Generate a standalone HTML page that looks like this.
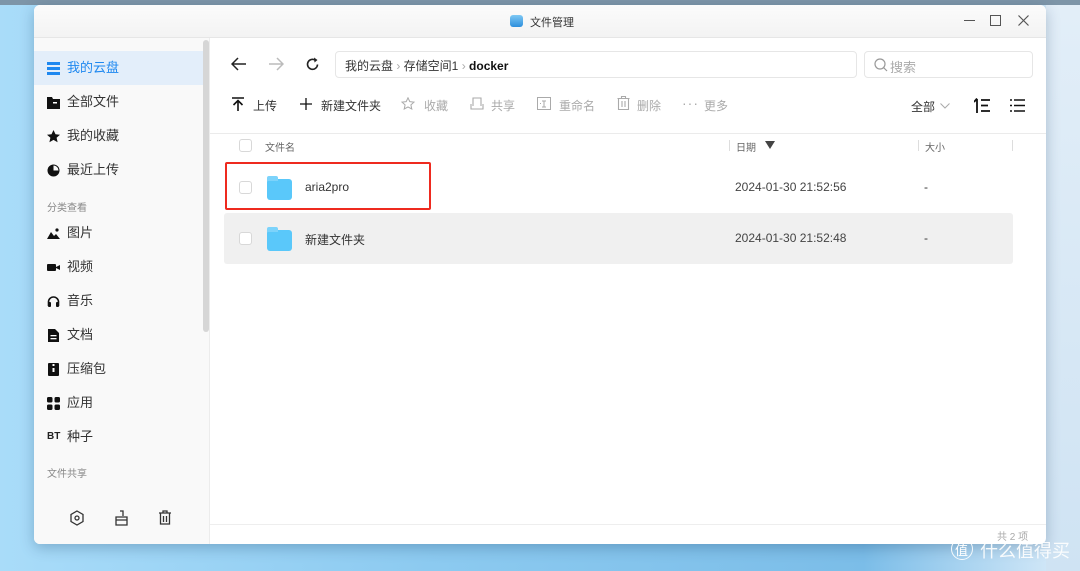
<!DOCTYPE html><html><head><meta charset="utf-8"><style>
*{margin:0;padding:0;box-sizing:border-box}
body{width:1080px;height:571px;overflow:hidden;position:relative;font-family:"Liberation Sans","Noto Sans CJK SC",sans-serif;background:linear-gradient(90deg,#a9dcf9 0%,#8ccaf0 40%,#7bbde8 80%,#cfe6f7 97%);}
.a{position:absolute}
.top{left:0;top:0;width:1080px;height:5px;background:#7d95a8}
.rt{left:1046px;top:5px;width:34px;height:566px;background:linear-gradient(180deg,#e2eef8,#cfe3f3)}
.win{left:34px;top:5px;width:1012px;height:539px;background:#fff;border-radius:6px;overflow:hidden;box-shadow:0 4px 14px rgba(0,40,80,.25)}
.tb{left:0;top:0;width:1012px;height:33px;background:linear-gradient(#fbfbfb,#f3f3f3);border-bottom:1px solid #e6e6e6}
.side{left:0;top:33px;width:176px;height:506px;background:#f9f9f9;border-right:1px solid #ececec}
.it{position:absolute;left:0;width:170px;height:34px;font-size:13px;color:#333;line-height:34px;padding-left:33px}
.ic{position:absolute;left:13px;top:11px;width:13px;height:13px}
.cat{position:absolute;left:13px;font-size:10px;color:#888}
.t{font-size:12px;color:#333;position:absolute;white-space:nowrap}
.g{color:#aaa}
.cb{position:absolute;width:13px;height:13px;border:1px solid #d8d8d8;border-radius:3px;background:#fff}
.fold{position:absolute;width:25px;height:21px;background:#5ac8fa;border-radius:3px}
.fold:before{content:"";position:absolute;left:0;top:-3px;width:11px;height:5px;background:#7cd3fb;border-radius:2px 2px 0 0}
svg.s{position:absolute}
</style></head><body>
<div class="a top"></div><div class="a rt"></div>
<div class="a win">
 <div class="a tb">
  <div class="a" style="left:476px;top:10px;width:13px;height:12px;border-radius:3px;background:linear-gradient(#7ec8f4,#2d8fdc)"></div>
  <div class="t" style="left:496px;top:9px;font-size:11px">文件管理</div>
  <div class="a" style="left:930px;top:15px;width:11px;height:1px;background:#555"></div>
  <div class="a" style="left:956px;top:10px;width:11px;height:11px;border:1px solid #555"></div>
  <svg class="s" style="left:984px;top:10px" width="11" height="11" viewBox="0 0 11 11"><path d="M0.5 0.5l10 10M10.5 0.5l-10 10" stroke="#555" stroke-width="1.2"/></svg>
 </div>
 <div class="a side">
  <div class="a" style="left:0;top:13px;width:169px;height:34px;background:#e3eefa"></div>
  <div class="it" style="top:13px;color:#1e88f0"><svg class="ic" viewBox="0 0 13 13"><rect x="0" y="0" width="13" height="3" fill="#1e88f0"/><rect x="0" y="5" width="13" height="3" fill="#1e88f0"/><rect x="0" y="10" width="13" height="3" fill="#1e88f0"/></svg>我的云盘</div>
  <div class="it" style="top:47px"><svg class="ic" viewBox="0 0 13 13"><path d="M0 1h5l1 2h7v10H0z" fill="#111"/><rect x="6" y="6" width="4" height="1.5" fill="#fff"/></svg>全部文件</div>
  <div class="it" style="top:81px"><svg class="ic" viewBox="0 0 13 13"><path d="M6.5 0l2 4.3 4.5.5-3.4 3 1 4.5-4.1-2.4-4.1 2.4 1-4.5L0 4.8l4.5-.5z" fill="#111"/></svg>我的收藏</div>
  <div class="it" style="top:115px"><svg class="ic" viewBox="0 0 13 13"><circle cx="6.5" cy="6.5" r="6" fill="#111"/><path d="M6.5 6.5V1.5A5 5 0 0 1 11.5 6.5z" fill="#f9f9f9"/></svg>最近上传</div>
  <div class="cat" style="top:161px">分类查看</div>
  <div class="it" style="top:178px"><svg class="ic" viewBox="0 0 13 13"><path d="M0 12l4-7 3 4 2-2 4 5z" fill="#111"/><circle cx="10" cy="3" r="1.6" fill="#111"/></svg>图片</div>
  <div class="it" style="top:212px"><svg class="ic" viewBox="0 0 13 13"><rect x="0" y="3" width="9" height="7" rx="1" fill="#111"/><path d="M9 6l4-2v5l-4-2z" fill="#111"/></svg>视频</div>
  <div class="it" style="top:246px"><svg class="ic" viewBox="0 0 13 13"><path d="M1.5 11V7a5 5 0 0 1 10 0v4" stroke="#111" stroke-width="1.6" fill="none"/><rect x="1" y="7" width="3" height="5" rx="1" fill="#111"/><rect x="9" y="7" width="3" height="5" rx="1" fill="#111"/></svg>音乐</div>
  <div class="it" style="top:280px"><svg class="ic" viewBox="0 0 13 13"><path d="M1 0h7l4 4v9H1z" fill="#111"/><rect x="3.5" y="6" width="6" height="1.3" fill="#fff"/><rect x="3.5" y="9" width="6" height="1.3" fill="#fff"/></svg>文档</div>
  <div class="it" style="top:314px"><svg class="ic" viewBox="0 0 13 13"><rect x="1" y="0" width="11" height="13" rx="1" fill="#111"/><rect x="5.5" y="1" width="2" height="2" fill="#fff"/><rect x="5.5" y="5" width="2" height="4" fill="#fff"/></svg>压缩包</div>
  <div class="it" style="top:348px"><svg class="ic" viewBox="0 0 13 13"><rect x="0" y="0" width="5.5" height="5.5" rx="1.5" fill="#111"/><rect x="7.5" y="0" width="5.5" height="5.5" rx="1.5" fill="#111"/><rect x="0" y="7.5" width="5.5" height="5.5" rx="1.5" fill="#111"/><rect x="7.5" y="7.5" width="5.5" height="5.5" rx="1.5" fill="#111"/></svg>应用</div>
  <div class="it" style="top:382px"><span style="position:absolute;left:13px;font-size:10px;font-weight:bold;color:#222">BT</span>种子</div>
  <div class="cat" style="top:427px">文件共享</div>
  <svg class="a" style="left:36px;top:472px" width="14" height="16" viewBox="0 0 14 16"><path d="M7 1l6 3.5v7L7 15 1 11.5v-7z" fill="none" stroke="#333" stroke-width="1.3"/><circle cx="7" cy="8" r="2" fill="none" stroke="#333" stroke-width="1.3"/></svg>
  <svg class="a" style="left:80px;top:472px" width="15" height="16" viewBox="0 0 15 16"><path d="M6 1h3v5M2 7h11v8H2zM2 10h11" fill="none" stroke="#333" stroke-width="1.3"/></svg>
  <svg class="a" style="left:124px;top:472px" width="14" height="16" viewBox="0 0 14 16"><path d="M1 3h12M5 3V1h4v2M2.5 3v11h9V3M5.5 6v6M8.5 6v6" fill="none" stroke="#333" stroke-width="1.3"/></svg>
  <div class="a" style="left:169px;top:2px;width:6px;height:292px;background:#d6d6d6;border-radius:3px"></div>
 </div>
 <!-- main -->
 <svg class="s" style="left:197px;top:52px" width="16" height="14" viewBox="0 0 16 14"><path d="M15 7H1.5M7 1L1 7l6 6" fill="none" stroke="#222" stroke-width="1.5"/></svg>
 <svg class="s" style="left:234px;top:52px" width="16" height="14" viewBox="0 0 16 14"><path d="M1 7h13.5M9 1l6 6-6 6" fill="none" stroke="#bbb" stroke-width="1.5"/></svg>
 <svg class="s" style="left:271px;top:52px" width="15" height="15" viewBox="0 0 15 15"><path d="M12.5 7.5A5 5 0 1 1 10 3" fill="none" stroke="#222" stroke-width="1.6"/><path d="M9 0.5l3.5 2.5-3 2.5z" fill="#222"/></svg>
 <div class="a" style="left:301px;top:46px;width:522px;height:27px;border:1px solid #e6e6e6;border-radius:4px"></div>
 <div class="t" style="left:311px;top:52px">我的云盘 <span class="g">›</span> 存储空间1 <span class="g">›</span> <b style="color:#111">docker</b></div>
 <div class="a" style="left:830px;top:46px;width:169px;height:27px;border:1px solid #e6e6e6;border-radius:4px"></div>
 <svg class="a" style="left:840px;top:53px" width="14" height="14" viewBox="0 0 14 14"><circle cx="6" cy="6" r="5" fill="none" stroke="#999" stroke-width="1.2"/><path d="M9.5 9.5l3.5 3.5" stroke="#999" stroke-width="1.2"/></svg>
 <div class="t g" style="left:856px;top:52px;font-size:13px">搜索</div>
 <svg class="s" style="left:198px;top:92px" width="12" height="14" viewBox="0 0 12 14"><path d="M0 1h12M6 14V4M1.5 8L6 3.5 10.5 8" fill="none" stroke="#111" stroke-width="1.6"/></svg>
 <div class="t" style="left:219px;top:92px">上传</div>
 <svg class="s" style="left:266px;top:93px" width="12" height="12" viewBox="0 0 12 12"><path d="M6 0v12M0 6h12" stroke="#111" stroke-width="1.3"/></svg>
 <div class="t" style="left:287px;top:92px">新建文件夹</div>
 <svg class="s" style="left:367px;top:92px" width="14" height="13" viewBox="0 0 14 13"><path d="M7 .8l1.8 3.8 4.2.5-3.1 2.8.9 4.1L7 9.9 3.2 12l.9-4.1L1 5.1l4.2-.5z" fill="none" stroke="#aaa" stroke-width="1"/></svg>
 <div class="t g" style="left:390px;top:92px">收藏</div>
 <svg class="s" style="left:436px;top:92px" width="14" height="13" viewBox="0 0 14 13"><path d="M3 9V1h8v8M1 7v5h12V7" fill="none" stroke="#aaa" stroke-width="1.1"/></svg>
 <div class="t g" style="left:457px;top:92px">共享</div>
 <svg class="s" style="left:503px;top:92px" width="14" height="13" viewBox="0 0 14 13"><rect x=".5" y=".5" width="13" height="12" fill="none" stroke="#aaa"/><path d="M5 4h4M7 4v6M5 10h4M3 6.5l1 0" stroke="#aaa"/></svg>
 <div class="t g" style="left:525px;top:92px">重命名</div>
 <svg class="s" style="left:583px;top:91px" width="13" height="14" viewBox="0 0 13 14"><path d="M.5 2.5h12M4.5 2.5V.5h4v2M1.5 2.5v11h10v-11M5 5v6M8 5v6" fill="none" stroke="#aaa" stroke-width="1.1"/></svg>
 <div class="t g" style="left:603px;top:92px">删除</div>
 <div class="t g" style="left:648px;top:90px;font-size:14px;letter-spacing:1px">···</div>
 <div class="t g" style="left:670px;top:92px">更多</div>
 <div class="t" style="left:877px;top:93px">全部</div>
 <svg class="s" style="left:906px;top:98px" width="10" height="6" viewBox="0 0 10 6"><path d="M.5.5L5 5 9.5.5" fill="none" stroke="#aaa"/></svg>
 <svg class="s" style="left:940px;top:93px" width="16" height="15" viewBox="0 0 16 15"><path d="M3 15V1M0 4l3-3.5M7 2h9M7 7.5h7M7 13h9" fill="none" stroke="#111" stroke-width="1.8"/></svg>
 <svg class="s" style="left:976px;top:94px" width="15" height="13" viewBox="0 0 15 13"><path d="M0 1h2M4 1h11M0 6.5h2M4 6.5h11M0 12h2M4 12h11" stroke="#111" stroke-width="1.6"/></svg>
 <div class="a" style="left:176px;top:128px;width:836px;height:1px;background:#ebebeb"></div>
 <div class="cb" style="left:205px;top:134px"></div>
 <div class="t" style="left:231px;top:134px;font-size:10px;color:#666">文件名</div>
 <div class="a" style="left:695px;top:135px;width:1px;height:11px;background:#ddd"></div>
 <div class="t" style="left:702px;top:134px;font-size:10px;color:#666">日期</div>
 <svg class="s" style="left:731px;top:136px" width="10" height="8" viewBox="0 0 10 8"><path d="M0 0h10L5 8z" fill="#444"/></svg>
 <div class="a" style="left:884px;top:135px;width:1px;height:11px;background:#ddd"></div>
 <div class="t" style="left:891px;top:134px;font-size:10px;color:#666">大小</div>
 <div class="a" style="left:978px;top:135px;width:1px;height:11px;background:#ddd"></div>
 <div class="a" style="left:191px;top:157px;width:206px;height:48px;border:2px solid #ee2a1f;border-radius:2px"></div>
 <div class="cb" style="left:205px;top:176px"></div>
 <div class="fold" style="left:233px;top:174px"></div>
 <div class="t" style="left:271px;top:175px">aria2pro</div>
 <div class="t" style="left:701px;top:175px;color:#444">2024-01-30 21:52:56</div>
 <div class="t" style="left:890px;top:175px">-</div>
 <div class="a" style="left:190px;top:208px;width:789px;height:51px;background:#f0f0f0;border-radius:3px"></div>
 <div class="cb" style="left:205px;top:227px"></div>
 <div class="fold" style="left:233px;top:225px"></div>
 <div class="t" style="left:271px;top:226px">新建文件夹</div>
 <div class="t" style="left:701px;top:226px;color:#444">2024-01-30 21:52:48</div>
 <div class="t" style="left:890px;top:226px">-</div>
 <div class="a" style="left:176px;top:519px;width:836px;height:1px;background:#eee"></div>
 <div class="t g" style="left:963px;top:523px;font-size:10px">共 2 项</div>
</div>
<div class="a" style="left:951px;top:538px;width:22px;height:22px;border-radius:50%;border:1.5px solid #fff;opacity:.9"></div>
<div class="t" style="left:955px;top:540px;font-size:13px;color:#fff">值</div>
<div class="t" style="left:980px;top:537px;font-size:18px;color:#fff;opacity:.9">什么值得买</div>
</body></html>
